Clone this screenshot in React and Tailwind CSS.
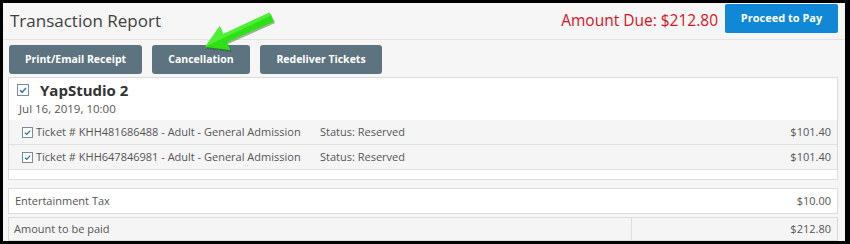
import React from "react";

function Check({ size }) {
    return <span className={'inline-flex items-center justify-center border border-[#7a8a96] bg-white shrink-0 ' + size}>
        <svg viewBox="0 0 12 12" className="w-full h-full">
            <path d="M2.5 6.2 L5 8.6 L9.6 3.4" fill="none" stroke="#1d6fb8" strokeWidth="1.6"/>
        </svg>
    </span>
}

function SlateButton({ children, width }) {
    return <button className={'h-[29px] rounded-[3px] bg-[#5d7480] text-white font-bold text-[10.5px] ' + width}>
        {children}
    </button>
}

const tickets = [
    { id: 'KHH481686488', price: '$101.40' },
    { id: 'KHH647846981', price: '$101.40' },
];

export default function App() {
    return <div className="w-[850px] h-[244px] bg-black pt-[3px] pl-[3px] pr-[5px] pb-[3px] font-['Open_Sans',sans-serif]">
        <div className="relative h-full bg-[#f6f6f6] overflow-hidden">
            <div className="h-[37px] flex items-start justify-between border-b border-[#e4e4e4] pr-[7px]">
                <h1 className="pl-[7px] pt-[6px] text-[17px] leading-[24px] text-[#3f3f3f]">Transaction Report</h1>
                <div className="flex items-start">
                    <span className="pt-[6px] text-[15.5px] leading-[22px] text-[#d4141c]">Amount Due: $212.80</span>
                    <button className="ml-[7px] mt-[1px] w-[113px] h-[29px] rounded-[2px] bg-[#1088d6] text-white font-bold text-[11px]">
                        Proceed to Pay
                    </button>
                </div>
            </div>

            <div className="flex gap-[10px] pl-[6px] pt-[5px]">
                <SlateButton width="w-[133px]">Print/Email Receipt</SlateButton>
                <SlateButton width="w-[98px]">Cancellation</SlateButton>
                <SlateButton width="w-[122px]">Redeliver Tickets</SlateButton>
            </div>

            <div className="mt-[3px] ml-[5px] w-[830px] h-[103px] bg-white border border-[#dcdcdc]">
                <div className="h-[42px] pl-[8px] pt-[3px]">
                    <div className="flex items-center gap-[11px]">
                        <Check size="w-[12px] h-[12px]"/>
                        <span className="font-bold text-[15px] leading-[18px] text-[#333]">YapStudio 2</span>
                    </div>
                    <div className="pl-[2px] mt-[1px] text-[11.5px] leading-[18px] text-[#555]">Jul 16, 2019, 10:00</div>
                </div>
                {tickets.map(t => <div key={t.id} className="h-[25px] flex items-center bg-[#f5f5f5] border-b border-[#e0e0e0] text-[11px] text-[#555] pr-[6px]">
                    <div className="w-[311px] flex items-center pl-[13px] gap-[3px]">
                        <Check size="w-[11px] h-[11px]"/>
                        <span>Ticket # {t.id} - Adult - General Admission</span>
                    </div>
                    <span className="flex-1">Status: Reserved</span>
                    <span>{t.price}</span>
                </div>)}
            </div>

            <div className="mt-[8px] ml-[5px] w-[830px] h-[26px] flex items-center justify-between bg-white border border-[#dcdcdc] px-[6px] text-[11px] text-[#555]">
                <span>Entertainment Tax</span>
                <span>$10.00</span>
            </div>

            <div className="mt-[3px] ml-[5px] w-[830px] h-[24px] flex border border-[#dcdcdc] bg-[#f5f5f5] text-[11px] text-[#555]">
                <div className="w-[623px] border-r border-[#dcdcdc] pl-[5px] flex items-center">Amount to be paid</div>
                <div className="flex-1 flex items-center justify-end pr-[6px]">$212.80</div>
            </div>

            <svg className="absolute left-[187px] top-[5px]" width="92" height="50" viewBox="0 0 92 50">
                <g transform="translate(-190 -8)">
                    <path d="M206 49 L232 52 L228 44 L275 23 L271 14 L224 36 L221 28 Z" fill="#1b6b12" opacity="0.45"/>
                    <path d="M205 47 L230.4 49.9 L226.9 42.1 L273.6 21.7 L269.6 12.5 L223.3 34 L219.8 26.1 Z" fill="#2fe016"/>
                    <path d="M205 47 L219.8 26.1 L223.3 34 L269.6 12.5 L271 15.5 L224.5 37.5 Z" fill="#5cf542" opacity="0.7"/>
                </g>
            </svg>
        </div>
    </div>
}
